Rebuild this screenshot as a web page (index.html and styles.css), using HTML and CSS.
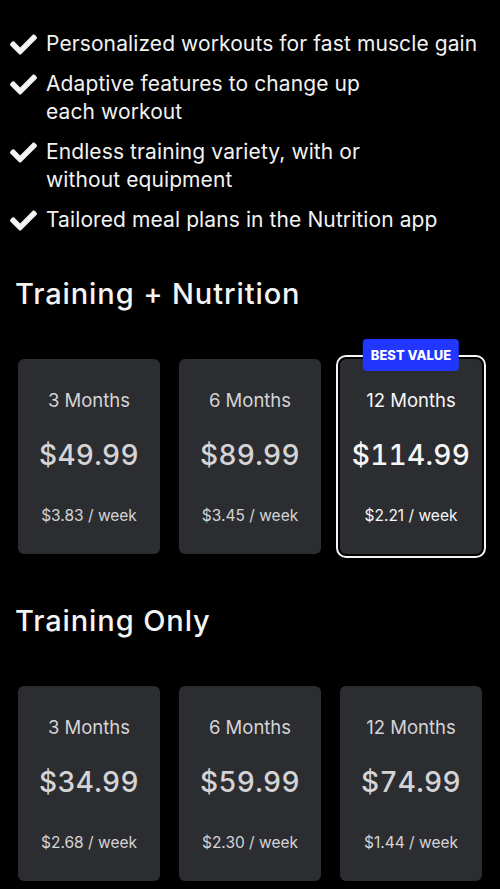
FILE: index.html
```html
<!DOCTYPE html>
<html lang="en">
<head>
<meta charset="utf-8">
<title>Plans</title>
<link rel="stylesheet" href="styles.css">
</head>
<body>
<main class="page">
  <ul class="features">
    <li class="feature"><svg class="check" viewBox="0 0 512 512"><path d="M173.898 439.404l-166.4-166.4c-9.997-9.997-9.997-26.206 0-36.204l36.203-36.204c9.997-9.998 26.207-9.998 36.204 0L192 312.69 432.095 72.596c9.997-9.997 26.207-9.997 36.204 0l36.203 36.204c9.997 9.997 9.997 26.206 0 36.204l-294.4 294.401c-9.998 9.997-26.207 9.997-36.204-.001z"/></svg><span>Personalized workouts for fast muscle gain</span></li>
    <li class="feature"><svg class="check" viewBox="0 0 512 512"><path d="M173.898 439.404l-166.4-166.4c-9.997-9.997-9.997-26.206 0-36.204l36.203-36.204c9.997-9.998 26.207-9.998 36.204 0L192 312.69 432.095 72.596c9.997-9.997 26.207-9.997 36.204 0l36.203 36.204c9.997 9.997 9.997 26.206 0 36.204l-294.4 294.401c-9.998 9.997-26.207 9.997-36.204-.001z"/></svg><span>Adaptive features to change up<br>each workout</span></li>
    <li class="feature"><svg class="check" viewBox="0 0 512 512"><path d="M173.898 439.404l-166.4-166.4c-9.997-9.997-9.997-26.206 0-36.204l36.203-36.204c9.997-9.998 26.207-9.998 36.204 0L192 312.69 432.095 72.596c9.997-9.997 26.207-9.997 36.204 0l36.203 36.204c9.997 9.997 9.997 26.206 0 36.204l-294.4 294.401c-9.998 9.997-26.207 9.997-36.204-.001z"/></svg><span>Endless training variety, with or<br>without equipment</span></li>
    <li class="feature"><svg class="check" viewBox="0 0 512 512"><path d="M173.898 439.404l-166.4-166.4c-9.997-9.997-9.997-26.206 0-36.204l36.203-36.204c9.997-9.998 26.207-9.998 36.204 0L192 312.69 432.095 72.596c9.997-9.997 26.207-9.997 36.204 0l36.203 36.204c9.997 9.997 9.997 26.206 0 36.204l-294.4 294.401c-9.998 9.997-26.207 9.997-36.204-.001z"/></svg><span>Tailored meal plans in the Nutrition app</span></li>
  </ul>

  <section class="plan-group first">
    <h2 class="group-title">Training + Nutrition</h2>
    <div class="cards">
      <div class="card"><div class="months">3 Months</div><div class="price">$49.99</div><div class="weekly">$3.83 / week</div></div>
      <div class="card"><div class="months">6 Months</div><div class="price">$89.99</div><div class="weekly">$3.45 / week</div></div>
      <div class="card selected"><span class="badge">BEST VALUE</span><div class="months">12 Months</div><div class="price">$114.99</div><div class="weekly">$2.21 / week</div></div>
    </div>
  </section>

  <section class="plan-group">
    <h2 class="group-title">Training Only</h2>
    <div class="cards">
      <div class="card"><div class="months">3 Months</div><div class="price">$34.99</div><div class="weekly">$2.68 / week</div></div>
      <div class="card"><div class="months">6 Months</div><div class="price">$59.99</div><div class="weekly">$2.30 / week</div></div>
      <div class="card"><div class="months">12 Months</div><div class="price">$74.99</div><div class="weekly">$1.44 / week</div></div>
    </div>
  </section>
</main>
</body>
</html>
```

FILE: styles.css
```css
html, body {
  margin: 0;
  padding: 0;
  background: #000;
}

body {
  font-family: Inter, "Liberation Sans", sans-serif;
  color: #f2f2f2;
  width: 500px;
  height: 889px;
  overflow: hidden;
}

.page {
  padding: 30px 18px 0 10px;
}

.features {
  list-style: none;
  margin: 0;
  padding: 0;
  display: flex;
  flex-direction: column;
  gap: 12px;
}

.feature {
  display: flex;
  align-items: flex-start;
  gap: 9px;
  font-size: 21px;
  line-height: 28px;
  letter-spacing: 0.1px;
}

.check {
  width: 27px;
  height: 27px;
  flex: none;
  fill: #f4f4f4;
  margin-top: 1px;
}

.plan-group {
  margin-top: 50px;
  padding-left: 8px;
}

.plan-group.first {
  margin-top: 43px;
}

.group-title {
  margin: 0 0 48px -3px;
  font-family: Inter, sans-serif;
  font-weight: 500;
  font-size: 29px;
  line-height: 34px;
  color: #f4f4f4;
  letter-spacing: 0.9px;
}

.cards {
  display: grid;
  grid-template-columns: repeat(3, 142px);
  gap: 19px;
}

.card {
  position: relative;
  background: #2c2d31;
  border-radius: 6px;
  height: 195px;
  box-sizing: border-box;
  padding-top: 28px;
  display: flex;
  flex-direction: column;
  align-items: center;
  color: #d4d4d6;
}

.card.selected {
  outline: 2px solid #f4f4f4;
  outline-offset: 2px;
  color: #f6f6f6;
}

.months {
  font-size: 18.5px;
  line-height: 26px;
}

.price {
  margin-top: 24px;
  font-size: 28px;
  line-height: 36px;
  font-weight: 500;
  letter-spacing: 0.3px;
  font-variant-numeric: tabular-nums;
}

.weekly {
  margin-top: 33px;
  font-size: 15.5px;
  line-height: 20px;
}

.badge {
  position: absolute;
  top: -20px;
  left: 50%;
  transform: translateX(-50%);
  background: #2136ff;
  color: #fff;
  font-weight: 800;
  font-size: 13px;
  line-height: 32px;
  padding: 0 8px;
  border-radius: 4px;
  white-space: nowrap;
}
```
